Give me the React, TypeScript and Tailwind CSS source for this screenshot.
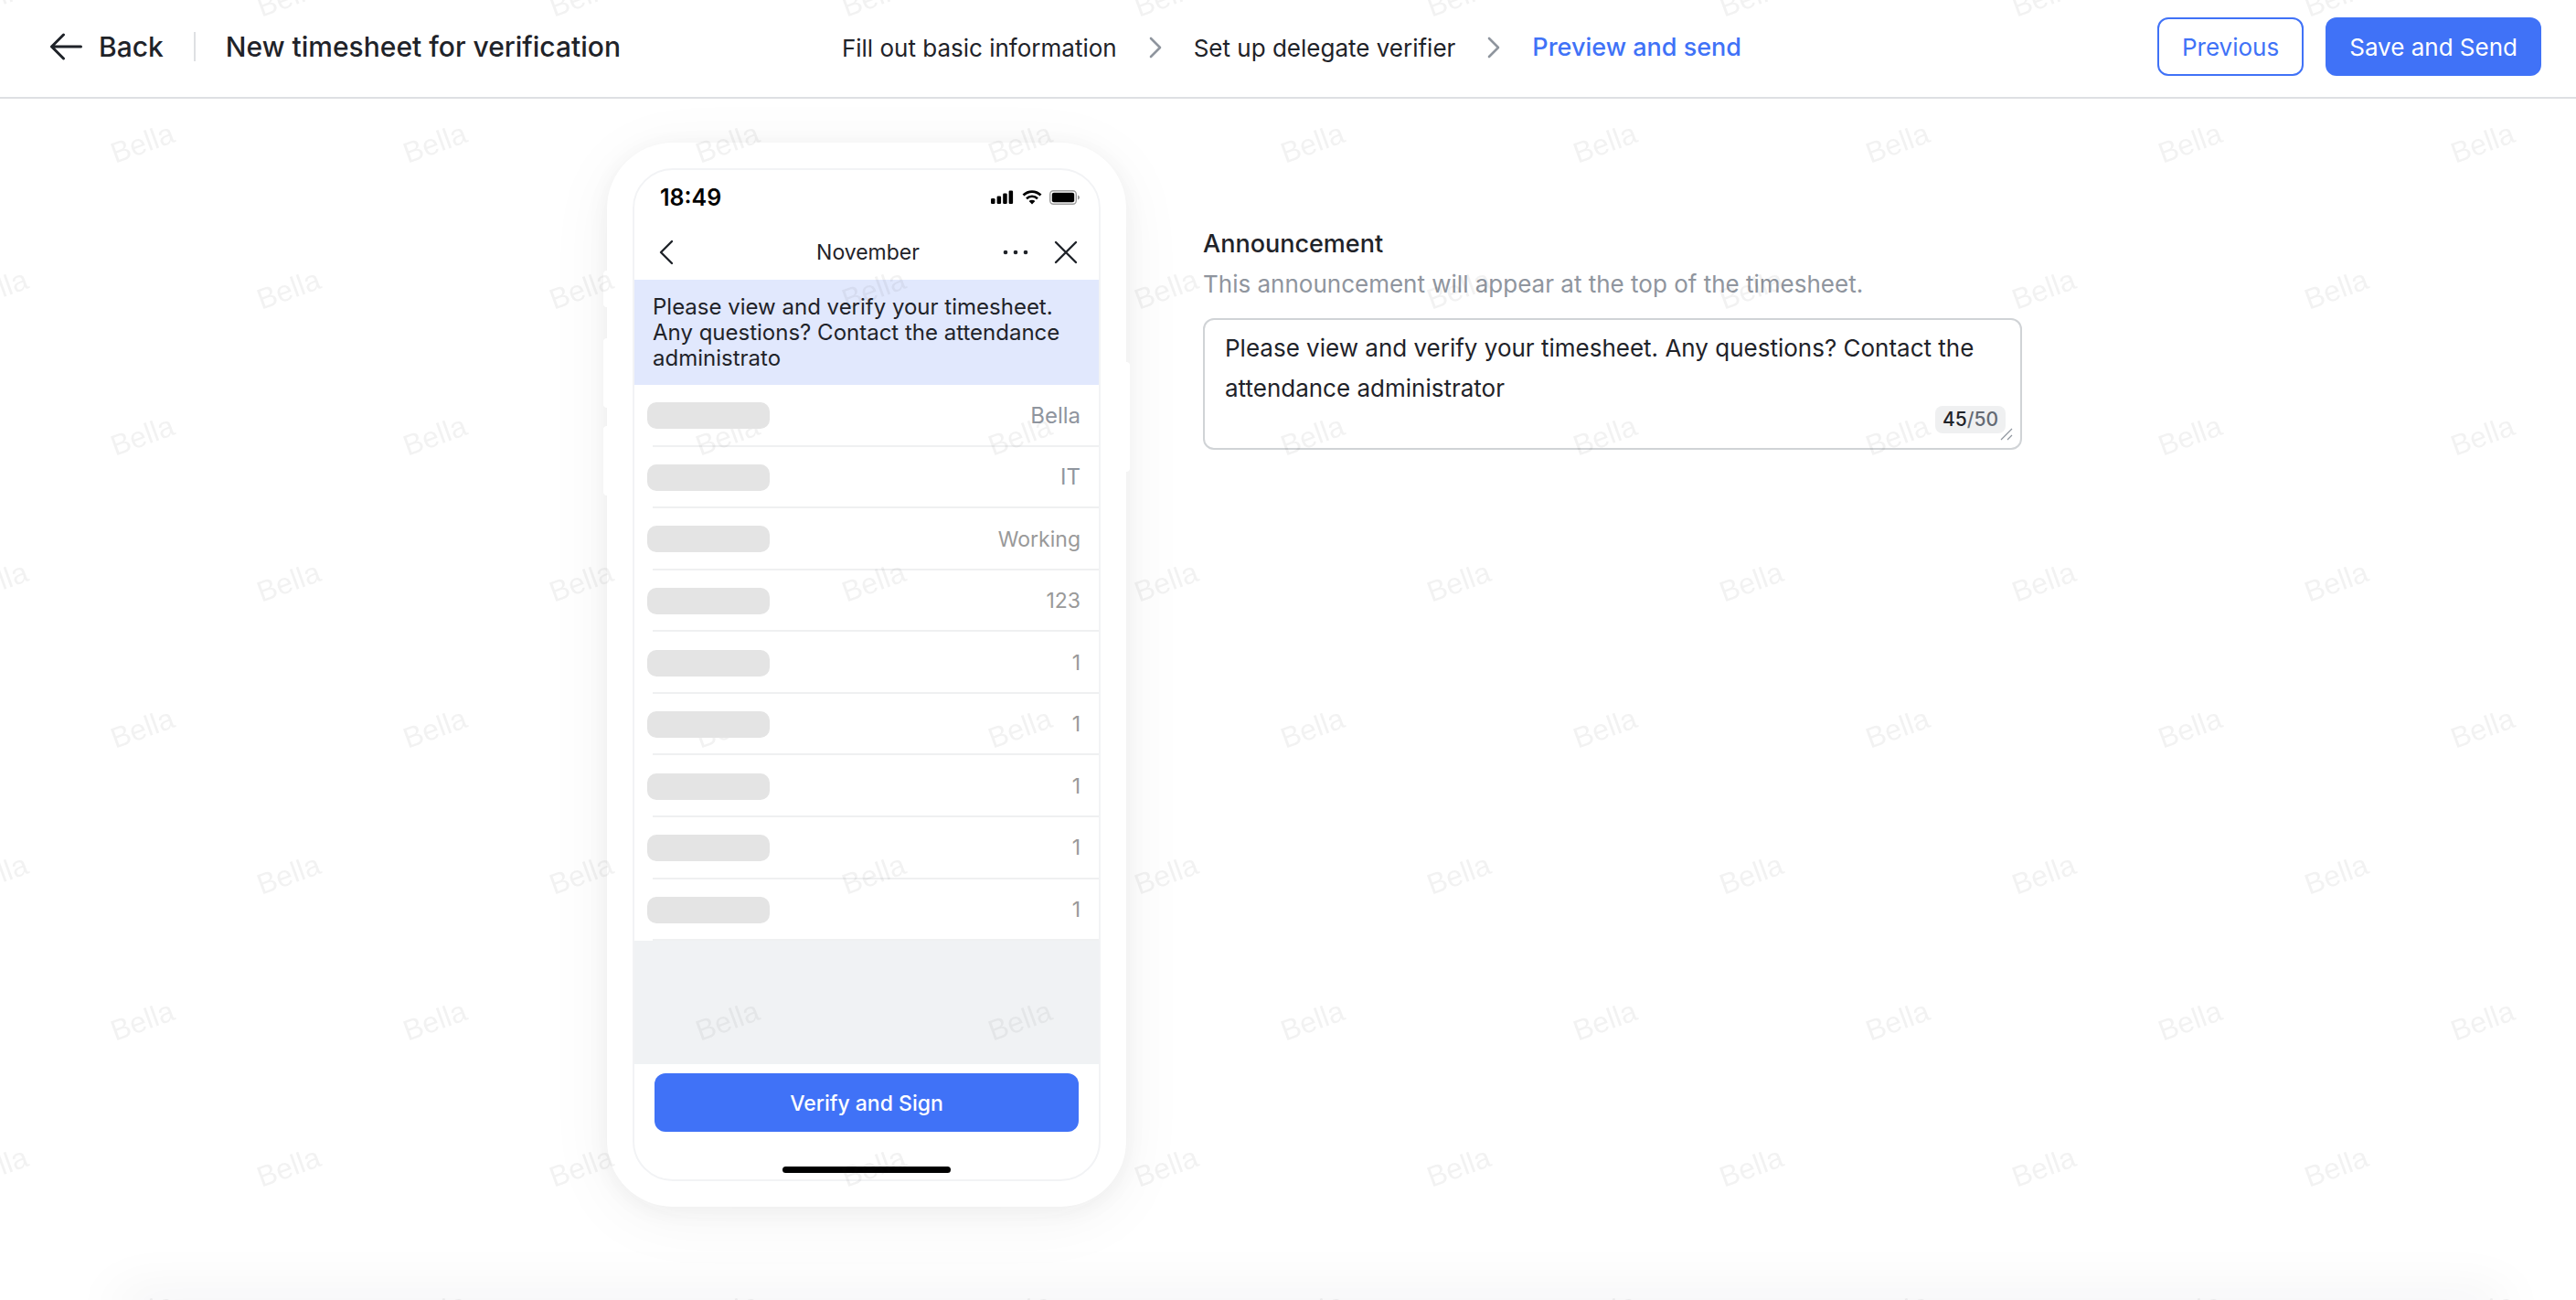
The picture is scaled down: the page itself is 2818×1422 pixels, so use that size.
import { useState } from 'react'

const STEPS = ['Fill out basic information', 'Set up delegate verifier', 'Preview and send']

const ROWS = [
  { value: 'Bella', tone: 'text-[24px] text-[#8f959e]' },
  { value: 'IT', tone: 'text-[24px] text-[#8f959e]' },
  { value: 'Working', tone: 'text-[23px] text-[#999999]' },
  { value: '123', tone: 'text-[23px] text-[#999999]' },
  { value: '1', tone: 'text-[23px] text-[#999999]' },
  { value: '1', tone: 'text-[23px] text-[#999999]' },
  { value: '1', tone: 'text-[23px] text-[#999999]' },
  { value: '1', tone: 'text-[23px] text-[#999999]' },
  { value: '1', tone: 'text-[23px] text-[#999999]' },
]

function Watermark() {
  return (
    <svg className="absolute inset-0 z-10 w-full h-full pointer-events-none" aria-hidden="true">
      <defs>
        <pattern id="watermark" x="76" y="78" width="320" height="320" patternUnits="userSpaceOnUse">
          <g fontFamily="Liberation Sans, Arial, sans-serif" fontSize="32" fill="#1f2329" fillOpacity="0.06">
            <text transform="translate(50 101) rotate(-20)">Bella</text>
            <text transform="translate(210 261) rotate(-20)">Bella</text>
          </g>
        </pattern>
      </defs>
      <rect width="100%" height="100%" fill="url(#watermark)" />
    </svg>
  )
}

function Header() {
  return (
    <header className="grid grid-cols-[1fr_auto_1fr] items-center h-[108px] pb-1 border-b-2 border-[#dee0e3]">
      <div className="flex items-center pl-[54px]">
        <button type="button" className="flex items-center gap-[18px] text-[30px] font-medium">
          <svg width="36" height="30" viewBox="0 0 36 30" fill="none" stroke="currentColor" strokeWidth="3" strokeLinecap="round" strokeLinejoin="round" aria-hidden="true">
            <path d="M34.5 15H2.5M15.5 2L2.5 15l13 13" />
          </svg>
          Back
        </button>
        <span className="w-0.5 h-8 mx-[33px] bg-[#dee0e3]" />
        <h1 className="text-[30px] font-medium">New timesheet for verification</h1>
      </div>

      <ol className="flex items-center pl-2 pt-0.5 text-[26px]">
        {STEPS.map((step, i) => (
          <li key={step} className="flex items-center">
            {i > 0 && (
              <svg className="mx-[35px]" width="14" height="24" viewBox="0 0 14 24" fill="none" stroke="#8f959e" strokeWidth="2.6" strokeLinecap="round" strokeLinejoin="round" aria-hidden="true">
                <path d="M2 2l10 10L2 22" />
              </svg>
            )}
            <span className={i === STEPS.length - 1 ? 'text-[27px] font-medium text-[#4072f7]' : ''}>{step}</span>
          </li>
        ))}
      </ol>

      <div className="flex items-center justify-end gap-6 pr-[38px] text-[26px]">
        <button type="button" className="h-16 px-[25px] rounded-xl border-2 border-[#4072f7] text-[#4072f7] bg-white">Previous</button>
        <button type="button" className="h-16 px-[26px] rounded-xl text-white bg-[#4072f7]">Save and Send</button>
      </div>
    </header>
  )
}

function StatusBar() {
  return (
    <div className="flex items-center justify-between pl-[28px] pr-5 pt-[14px] text-black">
      <span className="text-[25px] leading-8 font-semibold">18:49</span>
      <svg width="98" height="16" viewBox="0 0 98 16" fill="currentColor" aria-hidden="true">
        <rect x="0" y="9" width="4.5" height="6" rx="1.2" />
        <rect x="6.6" y="6.5" width="4.5" height="8.5" rx="1.2" />
        <rect x="13.2" y="3.5" width="4.5" height="11.5" rx="1.2" />
        <rect x="19.6" y="0.5" width="4.5" height="14.5" rx="1.2" />
        <path d="M35.5 5.5a13.5 13.5 0 0 1 19 0" fill="none" stroke="currentColor" strokeWidth="2.8" />
        <path d="M39 9.2a8.6 8.6 0 0 1 12 0" fill="none" stroke="currentColor" strokeWidth="2.6" />
        <path d="M45 15.5l-3.4-3.4a4.8 4.8 0 0 1 6.8 0z" />
        <rect x="64.7" y="0.8" width="28.6" height="14.4" rx="3.6" fill="none" stroke="currentColor" strokeOpacity="0.38" strokeWidth="1.4" />
        <rect x="66.8" y="2.8" width="24.4" height="10.4" rx="2" />
        <path d="M95 5.5c1.6.7 2 1.6 2 2.5s-.4 1.8-2 2.5z" fillOpacity="0.4" />
      </svg>
    </div>
  )
}

function PhoneNav() {
  return (
    <div className="grid grid-cols-[1fr_auto_1fr] items-center h-[74px] pt-3.5 pl-[26px] pr-[23px]">
      <svg width="17" height="28" viewBox="0 0 17 28" fill="none" stroke="currentColor" strokeWidth="2.4" strokeLinecap="round" strokeLinejoin="round" aria-hidden="true">
        <path d="M15 2L3 14l12 12" />
      </svg>
      <span className="text-[23px]">November</span>
      <div className="flex items-center justify-end gap-7">
        <svg width="28" height="6" viewBox="0 0 28 6" fill="currentColor" aria-hidden="true">
          <circle cx="3" cy="3" r="2.3" />
          <circle cx="14" cy="3" r="2.3" />
          <circle cx="25" cy="3" r="2.3" />
        </svg>
        <svg width="26" height="26" viewBox="0 0 26 26" fill="none" stroke="currentColor" strokeWidth="2.4" strokeLinecap="round" aria-hidden="true">
          <path d="M2 2l22 22M24 2L2 24" />
        </svg>
      </div>
    </div>
  )
}

function Phone({ announcement }: { announcement: string }) {
  return (
    <div className="relative shrink-0 w-[568px] p-7 rounded-[72px] bg-white shadow-[0_12px_72px_rgba(31,35,41,0.05),0_4px_24px_rgba(31,35,41,0.05)]">
      {/* side keys */}
      <span className="absolute -left-1 top-[140px] w-1 h-10 rounded-l-sm bg-white" />
      <span className="absolute -left-1 top-[214px] w-1 h-[76px] rounded-l-sm bg-white" />
      <span className="absolute -left-1 top-[310px] w-1 h-[76px] rounded-l-sm bg-white" />
      <span className="absolute -right-1 top-[240px] w-1 h-[120px] rounded-r-sm bg-white" />

      <div className="h-[1108px] flex flex-col rounded-[44px] border-2 border-[#f2f3f5]">
        <StatusBar />
        <PhoneNav />
        <p className="h-[115px] px-5 pt-4 text-[24px] leading-7 bg-[#e1e8fd]">{announcement}</p>

        <ul className="flex flex-col h-[608px] shrink-0">
          {ROWS.map((row, i) => (
            <li key={i} className="flex flex-1 pl-[14px]">
              <span className="relative z-20 self-center w-[134px] h-[29px] -mr-[128px] rounded-[10px] bg-[#e4e4e4]" />
              <span className={`flex flex-1 items-center justify-end pr-5 pt-0.5 border-b-2 border-[#eff0f1] ${row.tone}`}>
                {row.value}
              </span>
            </li>
          ))}
        </ul>

        <div className="h-[135px] shrink-0 bg-[#f0f2f4]" />

        <div className="flex flex-col items-center px-[22px] pt-[10px]">
          <button type="button" className="w-full h-16 pt-0.5 rounded-xl text-[23px] font-medium text-white bg-[#4072f7]">Verify and Sign</button>
          <span className="w-[184px] h-[7px] mt-[38px] rounded-full bg-black" />
        </div>
      </div>
    </div>
  )
}

export default function App() {
  const [text, setText] = useState('Please view and verify your timesheet. Any questions? Contact the attendance administrator')

  return (
    <div className="relative flex flex-col min-h-screen overflow-hidden bg-white text-[#1f2329] font-['Inter',sans-serif]">
      <Header />

      <main className="flex flex-1 items-start justify-center gap-[84px] pt-12 pl-[58px]">
        <Phone announcement="Please view and verify your timesheet. Any questions? Contact the attendance administrato" />

        <div className="w-[896px] pt-[91px]">
          <label htmlFor="announcement" className="block text-[27px] leading-10 font-medium">Announcement</label>
          <p className="mt-1 text-[26px] leading-10 text-[#8f959e]">This announcement will appear at the top of the timesheet.</p>
          <div className="relative mt-[17px]">
            <textarea
              id="announcement"
              value={text}
              onChange={e => setText(e.target.value)}
              className="block w-full h-36 px-[22px] py-[9px] rounded-xl border-2 border-[#d0d3d6] bg-white text-[26px] leading-[44px] resize-none outline-none"
            />
            <span className="absolute right-[18px] bottom-[18px] px-2 rounded-lg bg-[#eff0f1] text-[21px] leading-[30px] font-medium text-[#646a73]">
              <span className="text-[#1f2329]">45</span>/50
            </span>
            <svg className="absolute right-[10px] bottom-[10px]" width="14" height="14" viewBox="0 0 14 14" stroke="#8f959e" strokeWidth="1.2" aria-hidden="true">
              <path d="M1 13L13 1M8 13l5-5" />
            </svg>
          </div>
        </div>
      </main>

      <footer className="h-0 ml-[140px] mr-[90px] shadow-[0_8px_60px_12px_rgba(31,35,41,0.09)]" />
      <Watermark />
    </div>
  )
}
